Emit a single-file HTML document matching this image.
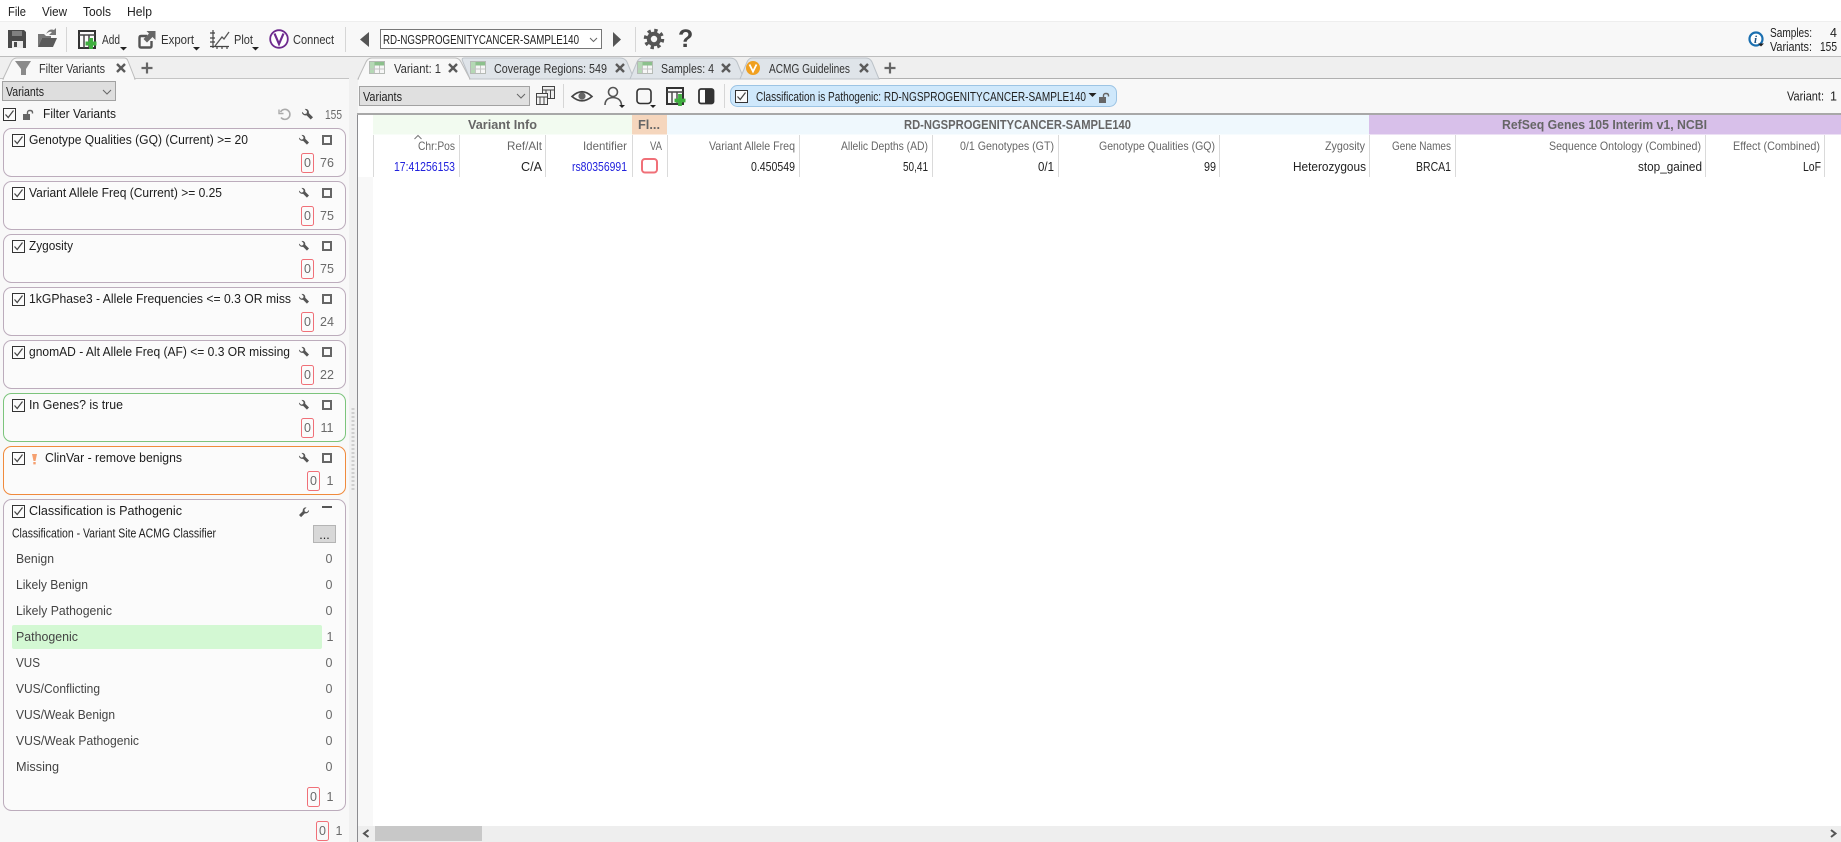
<!DOCTYPE html>
<html lang="en"><head><meta charset="utf-8"><title>Filter Variants</title>
<style>
html,body{margin:0;padding:0;width:1841px;height:842px;overflow:hidden;background:#fff}
svg{display:block;position:absolute;left:0;top:0}
text{font-family:"Liberation Sans",sans-serif;font-size:12.5px;fill:#222}
.m{font-size:13px;fill:#222}
.c{font-size:13px;fill:#1c1c1c}
.g{font-size:12.5px;fill:#6a6a6a}
.h{font-size:12px;fill:#666}
.v{font-size:12.5px;fill:#222}
.b{fill:#2222dd}
.l{font-size:12.5px;fill:#444}
.t{font-size:12.5px;fill:#333}
.gh{font-family:"Liberation Sans",sans-serif;font-weight:bold;font-size:12.5px;fill:#666}
</style></head><body>
<svg width="1841" height="842" viewBox="0 0 1841 842" xmlns="http://www.w3.org/2000/svg">
<defs>
<symbol id="w" viewBox="0 0 12 12" overflow="visible"><path d="M0 3L2.5 5.5L5 5L5.5 2.5L3 0C5.5-.5 8 1.5 7.5 4.5L12 9L9.5 11.5L5 7C2.5 7.5-.5 5.5 0 3Z" fill="#555"/></symbol>
<symbol id="k" viewBox="0 0 13 13" overflow="visible"><rect x=".5" y=".5" width="12" height="12" fill="#fbfbfb" stroke="#333"/><path d="M2.5 6.5L5.2 9.5L10.5 2.5" fill="none" stroke="#444" stroke-width="1.2"/></symbol>
<symbol id="q" viewBox="0 0 10 10" overflow="visible"><rect x="1" y="1" width="8" height="8" fill="none" stroke="#666" stroke-width="2"/></symbol>
<symbol id="d" viewBox="0 0 16 13" overflow="visible"><rect x=".5" y=".5" width="15" height="12" fill="#f6f6f6" stroke="#b5bab5"/><rect x="1" y="1" width="14" height="3.5" fill="#8cc08c"/><rect x="1" y="1" width="4.5" height="11" fill="#b5d8b5"/><path d="M5.5 4.5V12M10.5 4.5V12M1 8H15" stroke="#c4c4c4"/></symbol>
<symbol id="x" viewBox="0 0 10 10" overflow="visible"><path d="M1 1L9 9M9 1L1 9" stroke="#5a5a5a" stroke-width="2.4"/></symbol>
<symbol id="p" viewBox="0 0 12 12" overflow="visible"><path d="M6 .5V11.5M.5 6H11.5" stroke="#666" stroke-width="2.2"/></symbol>
<symbol id="lk" viewBox="0 0 12 10" overflow="visible"><rect x="0" y="4" width="7" height="6" fill="#666"/><path d="M4.5 4V2.5Q4.5.5 7 .5Q9.5.5 9.5 2.5V3.5" fill="none" stroke="#666" stroke-width="1.4"/></symbol>
</defs>

<!-- backgrounds -->
<rect x="0" y="0" width="1841" height="842" fill="#fff"/>
<rect x="0" y="22" width="1841" height="34" fill="#f8f8f8"/>
<rect x="0" y="21" width="1841" height="1" fill="#eeeeee"/>
<rect x="0" y="56" width="1841" height="1" fill="#bdbdbd"/>
<rect x="0" y="57" width="1841" height="22" fill="#efefef"/>
<rect x="0" y="79" width="349" height="763" fill="#f8f8f8"/>
<rect x="349" y="79" width="9" height="763" fill="#f0f0f0"/>
<rect x="358" y="79" width="1483" height="34" fill="#f8f8f8"/>
<rect x="358" y="78" width="1483" height="1" fill="#b0b0b0"/>
<rect x="0" y="78" width="349" height="1" fill="#c4c4c4"/>
<rect x="357" y="113" width="1" height="729" fill="#8c8c90"/>
<rect x="357" y="113" width="1484" height="2" fill="#a8a8a8"/>

<!-- menu -->
<text class="m" x="8" y="16" textLength="18" lengthAdjust="spacingAndGlyphs">File</text>
<text class="m" x="42" y="16" textLength="25" lengthAdjust="spacingAndGlyphs">View</text>
<text class="m" x="83" y="16" textLength="28" lengthAdjust="spacingAndGlyphs">Tools</text>
<text class="m" x="127" y="16" textLength="25" lengthAdjust="spacingAndGlyphs">Help</text>

<!-- toolbar icons -->
<path d="M8 30H24L26 32V48H8Z" fill="#4a4a4a"/><rect x="12" y="31" width="10" height="5" fill="#808080"/><rect x="12" y="41" width="11" height="7" fill="#eaeaea"/><rect x="14" y="42" width="3" height="5" fill="#4a4a4a"/>
<path d="M38 34H44L46 36H51V38H42L38 47Z" fill="#777"/><path d="M42 38H57L53 47H38Z" fill="#5a5a5a"/><path d="M46 34Q49 28 54 30L56 28V35H49L52 32Q49 31 46 34Z" fill="#777"/>
<rect x="66" y="27" width="1" height="25" fill="#d6d6d6"/>
<rect x="79" y="31" width="16" height="17" fill="#fafafa" stroke="#333" stroke-width="2"/><path d="M79 35H95M84 35V48M89 35V48" stroke="#444" stroke-width="1.5"/><path d="M91 38V49M85.5 43.5H96.5" stroke="#3fae3f" stroke-width="4"/>
<text class="t" x="102" y="44" textLength="18" lengthAdjust="spacingAndGlyphs">Add</text>
<path d="M120 47h7l-3.5 3.5z" fill="#222"/>
<path d="M147 36H141Q139.500 36 139.500 38V46Q139.500 47.500 141 47.500H150Q151.500 47.500 151.500 46V41" fill="none" stroke="#555" stroke-width="2.4"/><path d="M144 42L151 35M146.500 31H155.500V40L152.500 37L147 42.500L143.500 39L149 33.500Z" fill="#666"/>
<text class="t" x="161" y="44" textLength="33" lengthAdjust="spacingAndGlyphs">Export</text>
<path d="M193 47h7l-3.500 3.500z" fill="#222"/>
<path d="M213 30V48M210 46.500H229M210 33h5M210 38h5M210 42h5M217 46v3M222 46v3M227 46v3" stroke="#444" stroke-width="1.200" fill="none"/><path d="M215 46L222 37L224 39L229 32" fill="none" stroke="#555" stroke-width="1.300"/>
<text class="t" x="234" y="44" textLength="19" lengthAdjust="spacingAndGlyphs">Plot</text>
<path d="M252 47h7l-3.500 3.500z" fill="#222"/>
<circle cx="279" cy="39" r="8.800" fill="#fff" stroke="#6d2a8e" stroke-width="1.800"/><path d="M274.500 33.500L279 44L283.500 33.500" fill="none" stroke="#6d2a8e" stroke-width="2.200"/>
<text class="t" x="293" y="44" textLength="41" lengthAdjust="spacingAndGlyphs">Connect</text>
<rect x="345" y="27" width="1" height="25" fill="#d6d6d6"/>
<path d="M369 32V47L360 39.500Z" fill="#555"/>
<rect x="380.500" y="29.500" width="221" height="19" fill="#fff" stroke="#777"/>
<text class="t" x="383" y="44" textLength="196" lengthAdjust="spacingAndGlyphs" style="fill:#222">RD-NGSPROGENITYCANCER-SAMPLE140</text>
<path d="M590 38L593.500 41.500L597 38" fill="none" stroke="#666"/>
<path d="M613 32V47L621 39.500Z" fill="#555"/>
<rect x="635" y="27" width="1" height="25" fill="#d6d6d6"/>
<circle cx="654" cy="39" r="8.500" fill="none" stroke="#555" stroke-width="3.500" stroke-dasharray="3.300 3.370"/><circle cx="654" cy="39" r="5.200" fill="none" stroke="#555" stroke-width="4"/>
<text x="678" y="47" style="font-size:25px;font-weight:bold;fill:#444">?</text>

<circle cx="1756" cy="39" r="6.500" fill="#fff" stroke="#1a6fb0" stroke-width="2.200"/><text x="1754" y="43" style="font-family:'Liberation Serif',serif;font-style:italic;font-weight:bold;font-size:11px;fill:#1a4f80">i</text><path d="M1758 43.500h6l-3 3z" fill="#222"/>
<text class="t" x="1770" y="37" textLength="42" lengthAdjust="spacingAndGlyphs" style="fill:#222">Samples:</text>
<text class="t" x="1837" y="37" text-anchor="end" style="fill:#222">4</text>
<text class="t" x="1770" y="51" textLength="42" lengthAdjust="spacingAndGlyphs" style="fill:#222">Variants:</text>
<text class="t" x="1820" y="51" textLength="17" lengthAdjust="spacingAndGlyphs" style="fill:#222">155</text>

<!-- left tabs -->
<path d="M3 79L11 62Q13 58 17 58H124Q127 58 128 61L135 79Z" fill="#f8f8f8" stroke="#bcbcbc"/><rect x="4" y="78" width="130" height="2" fill="#f8f8f8"/>
<path d="M15 61H31L26 69V75H21V69Z" fill="#8a8a8a"/>
<text class="t" x="39" y="73" textLength="66" lengthAdjust="spacingAndGlyphs">Filter Variants</text>
<use href="#x" x="116" y="63" width="10" height="10"/>
<use href="#p" x="141" y="62" width="12" height="12"/>

<!-- left combo -->
<rect x="2.500" y="81.500" width="113" height="19" fill="#dedede" stroke="#a2a2a2"/>
<text class="t" x="6" y="96" textLength="38" lengthAdjust="spacingAndGlyphs" style="fill:#222">Variants</text>
<path d="M103 90L107 94L111 90" fill="none" stroke="#666"/>
<use href="#k" x="3" y="108" width="13" height="13"/>
<use href="#lk" x="23" y="110" width="12" height="10"/>
<text class="c" x="43" y="118" textLength="73" lengthAdjust="spacingAndGlyphs">Filter Variants</text>
<path d="M280.500 112A5 5 0 1 1 281 117.500" fill="none" stroke="#aaa" stroke-width="1.600"/><path d="M279 109.500V113.500H283.500" fill="none" stroke="#aaa" stroke-width="1.400"/>
<use href="#w" x="302" y="109" width="11" height="11"/>
<text class="g" x="325" y="119" textLength="17" lengthAdjust="spacingAndGlyphs">155</text>

<!-- card 1 -->
<rect x="3.500" y="128.500" width="342" height="48" rx="8" fill="#fbfbfb" stroke="#bcacbc"/>
<use href="#k" x="12" y="134" width="13" height="13"/>
<text class="c" x="29" y="144" textLength="219" lengthAdjust="spacingAndGlyphs">Genotype Qualities (GQ) (Current) &gt;= 20</text>
<use href="#w" x="299" y="135" width="10" height="10"/><use href="#q" x="322" y="135" width="10" height="10"/>
<rect x="301.500" y="153.500" width="12" height="19" rx="2" fill="none" stroke="#f07078"/>
<text class="g" x="307.500" y="167" text-anchor="middle">0</text><text class="g" x="327" y="167" text-anchor="middle">76</text>

<!-- card 2 -->
<rect x="3.500" y="181.500" width="342" height="48" rx="8" fill="#fbfbfb" stroke="#bcacbc"/>
<use href="#k" x="12" y="187" width="13" height="13"/>
<text class="c" x="29" y="197" textLength="193" lengthAdjust="spacingAndGlyphs">Variant Allele Freq (Current) &gt;= 0.25</text>
<use href="#w" x="299" y="188" width="10" height="10"/><use href="#q" x="322" y="188" width="10" height="10"/>
<rect x="301.500" y="206.500" width="12" height="19" rx="2" fill="none" stroke="#f07078"/>
<text class="g" x="307.500" y="220" text-anchor="middle">0</text><text class="g" x="327" y="220" text-anchor="middle">75</text>

<!-- card 3 -->
<rect x="3.500" y="234.500" width="342" height="48" rx="8" fill="#fbfbfb" stroke="#bcacbc"/>
<use href="#k" x="12" y="240" width="13" height="13"/>
<text class="c" x="29" y="250" textLength="44" lengthAdjust="spacingAndGlyphs">Zygosity</text>
<use href="#w" x="299" y="241" width="10" height="10"/><use href="#q" x="322" y="241" width="10" height="10"/>
<rect x="301.500" y="259.500" width="12" height="19" rx="2" fill="none" stroke="#f07078"/>
<text class="g" x="307.500" y="273" text-anchor="middle">0</text><text class="g" x="327" y="273" text-anchor="middle">75</text>

<!-- card 4 -->
<rect x="3.500" y="287.500" width="342" height="48" rx="8" fill="#fbfbfb" stroke="#bcacbc"/>
<use href="#k" x="12" y="293" width="13" height="13"/>
<text class="c" x="29" y="303" textLength="262" lengthAdjust="spacingAndGlyphs">1kGPhase3 - Allele Frequencies &lt;= 0.3 OR miss</text>
<use href="#w" x="299" y="294" width="10" height="10"/><use href="#q" x="322" y="294" width="10" height="10"/>
<rect x="301.500" y="312.500" width="12" height="19" rx="2" fill="none" stroke="#f07078"/>
<text class="g" x="307.500" y="326" text-anchor="middle">0</text><text class="g" x="327" y="326" text-anchor="middle">24</text>

<!-- card 5 -->
<rect x="3.500" y="340.500" width="342" height="48" rx="8" fill="#fbfbfb" stroke="#bcacbc"/>
<use href="#k" x="12" y="346" width="13" height="13"/>
<text class="c" x="29" y="356" textLength="261" lengthAdjust="spacingAndGlyphs">gnomAD - Alt Allele Freq (AF) &lt;= 0.3 OR missing</text>
<use href="#w" x="299" y="347" width="10" height="10"/><use href="#q" x="322" y="347" width="10" height="10"/>
<rect x="301.500" y="365.500" width="12" height="19" rx="2" fill="none" stroke="#f07078"/>
<text class="g" x="307.500" y="379" text-anchor="middle">0</text><text class="g" x="327" y="379" text-anchor="middle">22</text>

<!-- card 6 -->
<rect x="3.500" y="393.500" width="342" height="48" rx="8" fill="#fbfbfb" stroke="#7cc47c"/>
<use href="#k" x="12" y="399" width="13" height="13"/>
<text class="c" x="29" y="409" textLength="94" lengthAdjust="spacingAndGlyphs">In Genes? is true</text>
<use href="#w" x="299" y="400" width="10" height="10"/><use href="#q" x="322" y="400" width="10" height="10"/>
<rect x="301.500" y="418.500" width="12" height="19" rx="2" fill="none" stroke="#f07078"/>
<text class="g" x="307.500" y="432" text-anchor="middle">0</text><text class="g" x="327" y="432" text-anchor="middle">11</text>

<!-- card 7 -->
<rect x="3.500" y="446.500" width="342" height="48" rx="8" fill="#fbfbfb" stroke="#f08a3c"/>
<use href="#k" x="12" y="452" width="13" height="13"/>
<path d="M32 454H37L35.500 461H33.500Z" fill="#f5a070"/><rect x="33.300" y="462" width="2.400" height="2.400" fill="#f5a070"/>
<text class="c" x="45" y="462" textLength="137" lengthAdjust="spacingAndGlyphs">ClinVar - remove benigns</text>
<use href="#w" x="299" y="453" width="10" height="10"/><use href="#q" x="322" y="453" width="10" height="10"/>
<rect x="307.500" y="471.500" width="12" height="19" rx="2" fill="none" stroke="#f07078"/>
<text class="g" x="313.500" y="485" text-anchor="middle">0</text><text class="g" x="330" y="485" text-anchor="middle">1</text>

<!-- card 8 -->
<rect x="3.500" y="499.500" width="342" height="311" rx="8" fill="#fbfbfb" stroke="#bcacbc"/>
<use href="#k" x="12" y="505" width="13" height="13"/>
<text class="c" x="29" y="515" textLength="153" lengthAdjust="spacingAndGlyphs">Classification is Pathogenic</text>
<g transform="translate(309,507) scale(-1,1)"><use href="#w" x="0" y="0" width="10" height="11"/></g>
<rect x="322" y="506" width="10" height="2" fill="#555"/>
<text class="v" x="12" y="537.500" textLength="204" lengthAdjust="spacingAndGlyphs">Classification - Variant Site ACMG Classifier</text>
<rect x="313.500" y="525.500" width="22" height="17" fill="#d8d8d8" stroke="#b4b4b4"/>
<text class="v" x="324.500" y="539" text-anchor="middle">...</text>

<rect x="12" y="625" width="310" height="24" rx="2" fill="#d3f8d3"/>
<text class="l" x="16" y="563" textLength="38" lengthAdjust="spacingAndGlyphs">Benign</text><text class="g" x="329" y="563" text-anchor="middle">0</text>
<text class="l" x="16" y="589" textLength="72" lengthAdjust="spacingAndGlyphs">Likely Benign</text><text class="g" x="329" y="589" text-anchor="middle">0</text>
<text class="l" x="16" y="615" textLength="96" lengthAdjust="spacingAndGlyphs">Likely Pathogenic</text><text class="g" x="329" y="615" text-anchor="middle">0</text>
<text class="l" x="16" y="641" textLength="62" lengthAdjust="spacingAndGlyphs">Pathogenic</text><text class="g" x="330" y="641" text-anchor="middle">1</text>
<text class="l" x="16" y="667" textLength="24" lengthAdjust="spacingAndGlyphs">VUS</text><text class="g" x="329" y="667" text-anchor="middle">0</text>
<text class="l" x="16" y="693" textLength="84" lengthAdjust="spacingAndGlyphs">VUS/Conflicting</text><text class="g" x="329" y="693" text-anchor="middle">0</text>
<text class="l" x="16" y="719" textLength="99" lengthAdjust="spacingAndGlyphs">VUS/Weak Benign</text><text class="g" x="329" y="719" text-anchor="middle">0</text>
<text class="l" x="16" y="745" textLength="123" lengthAdjust="spacingAndGlyphs">VUS/Weak Pathogenic</text><text class="g" x="329" y="745" text-anchor="middle">0</text>
<text class="l" x="16" y="771" textLength="43" lengthAdjust="spacingAndGlyphs">Missing</text><text class="g" x="329" y="771" text-anchor="middle">0</text>
<rect x="307.500" y="787.500" width="12" height="19" rx="2" fill="none" stroke="#f07078"/>
<text class="g" x="313.500" y="801" text-anchor="middle">0</text><text class="g" x="330" y="801" text-anchor="middle">1</text>

<rect x="316.500" y="821.500" width="12" height="19" rx="2" fill="none" stroke="#f07078"/>
<text class="g" x="322.500" y="835" text-anchor="middle">0</text><text class="g" x="339" y="835" text-anchor="middle">1</text>

<!-- splitter -->
<path d="M353 408V492" stroke="#cfcfcf" stroke-width="3" stroke-dasharray="2 2"/>

<!-- right tabs -->
<path d="M470 79L463 62Q461 58 464 58H620Q625 58 627 62L634 79Z" fill="#dfe4e9" stroke="#bcc2c8"/>
<path d="M630 79L637 62Q639 58 642 58H730Q735 58 737 62L744 79Z" fill="#dfe4e9" stroke="#bcc2c8"/>
<path d="M740 79L747 62Q749 58 752 58H866Q870 58 872 62L879 79Z" fill="#dfe4e9" stroke="#bcc2c8"/>
<path d="M358 79L366 62Q368 58 372 58H455Q459 58 461 62L470 79Z" fill="#f8f8f8" stroke="#bcbcbc"/><rect x="359" y="78" width="110" height="2" fill="#f8f8f8"/>
<use href="#d" x="369" y="61" width="16" height="13"/>
<text class="t" x="394" y="73" textLength="47" lengthAdjust="spacingAndGlyphs">Variant: 1</text>
<use href="#x" x="448" y="63" width="10" height="10"/>
<use href="#d" x="470" y="61" width="16" height="13"/>
<text class="t" x="494" y="73" textLength="113" lengthAdjust="spacingAndGlyphs">Coverage Regions: 549</text>
<use href="#x" x="615" y="63" width="10" height="10"/>
<use href="#d" x="637" y="61" width="16" height="13"/>
<text class="t" x="661" y="73" textLength="53" lengthAdjust="spacingAndGlyphs">Samples: 4</text>
<use href="#x" x="721" y="63" width="10" height="10"/>
<circle cx="753" cy="68" r="7" fill="#f0a020"/><path d="M749.500 64.500L753 71.500L756.500 64.500" fill="none" stroke="#fff" stroke-width="1.800"/>
<text class="t" x="769" y="73" textLength="81" lengthAdjust="spacingAndGlyphs">ACMG Guidelines</text>
<use href="#x" x="859" y="63" width="10" height="10"/>
<use href="#p" x="884" y="62" width="12" height="12"/>

<!-- right toolbar -->
<rect x="359.500" y="86.500" width="170" height="19" fill="#e0e0e0" stroke="#a2a2a2"/>
<text class="t" x="363" y="101" textLength="39" lengthAdjust="spacingAndGlyphs" style="fill:#222">Variants</text>
<path d="M517 94L521 98L525 94" fill="none" stroke="#666"/>
<rect x="542.500" y="86.500" width="12" height="12" fill="#eee" stroke="#444"/><path d="M542 90H555M546 90V98M550.500 90V98" stroke="#444"/>
<rect x="536.500" y="93.500" width="11" height="11" fill="#f4f4f4" stroke="#444"/><path d="M536 97H548M540 97V105M544 97V105" stroke="#444"/>
<rect x="563" y="84" width="1" height="24" fill="#d6d6d6"/>
<path d="M572 96.500Q582 87 592 96.500Q582 105 572 96.500Z" fill="#fafafa" stroke="#444" stroke-width="1.600"/><circle cx="582" cy="96" r="3.600" fill="#666"/>
<circle cx="613" cy="92" r="4.500" fill="none" stroke="#555" stroke-width="1.600"/><path d="M605 105Q605 98 613 97.500Q621 98 621.500 105" fill="none" stroke="#555" stroke-width="1.600"/><path d="M619 105h6l-3 3z" fill="#222"/>
<rect x="637" y="89" width="14" height="14.500" rx="3" fill="none" stroke="#333" stroke-width="1.600"/><path d="M650 105h6l-3 3z" fill="#222"/>
<rect x="667" y="88" width="16" height="16" fill="#fafafa" stroke="#333" stroke-width="2"/><path d="M667 92H683M672 92V104M677 92V104" stroke="#444" stroke-width="1.400"/><path d="M680 94V106M674.500 100.500H685.500" stroke="#3fae3f" stroke-width="3.800"/>
<rect x="699" y="89" width="14.500" height="14.500" rx="2" fill="#fff" stroke="#333" stroke-width="1.800"/><rect x="705" y="89" width="8.500" height="14.500" fill="#333"/>
<rect x="724" y="84" width="1" height="24" fill="#d6d6d6"/>
<rect x="730.500" y="85.500" width="386" height="21" rx="7" fill="#cfe8fb" stroke="#9cc4e4"/>
<use href="#k" x="735" y="90" width="13" height="13"/>
<text class="t" x="756" y="101" textLength="330" lengthAdjust="spacingAndGlyphs" style="fill:#222">Classification is Pathogenic: RD-NGSPROGENITYCANCER-SAMPLE140</text>
<path d="M1088.500 93h8l-4 4z" fill="#222"/>
<use href="#lk" x="1099" y="93" width="12" height="10"/>
<text class="t" x="1787" y="100.500" textLength="37" lengthAdjust="spacingAndGlyphs" style="fill:#222">Variant:</text>
<text class="t" x="1837" y="100.500" text-anchor="end" style="fill:#222">1</text>

<!-- table -->
<rect x="358" y="115" width="15" height="711" fill="#f8f8f8"/>
<rect x="358" y="115" width="15" height="62" fill="#fff"/>
<rect x="373" y="115" width="259" height="19.500" fill="#f2fbf0"/>
<rect x="632" y="115" width="35" height="19.500" fill="#f5d6bd"/>
<rect x="667" y="115" width="702" height="19.500" fill="#eff8fd"/>
<rect x="1369" y="115" width="472" height="19.500" fill="#d8c0ea"/>
<text class="gh" x="468" y="129" textLength="69" lengthAdjust="spacingAndGlyphs">Variant Info</text>
<text class="gh" x="638" y="129" textLength="22" lengthAdjust="spacingAndGlyphs">Fl...</text>
<text class="gh" x="904" y="129" textLength="227" lengthAdjust="spacingAndGlyphs">RD-NGSPROGENITYCANCER-SAMPLE140</text>
<text class="gh" x="1502" y="129" textLength="205" lengthAdjust="spacingAndGlyphs">RefSeq Genes 105 Interim v1, NCBI</text>

<path d="M373.500 135V177M459.500 135V177M545.500 135V177M632.500 135V177M667.500 135V177M799.500 135V177M932.500 135V177M1058.500 135V177M1219.500 135V177M1369.500 135V177M1455.500 135V177M1705.500 135V177M1824.500 135V177" stroke="#dadada" fill="none"/>
<path d="M414.500 139L418 135.500L421.500 139" fill="none" stroke="#777"/>

<text class="h" x="418" y="150" textLength="37" lengthAdjust="spacingAndGlyphs">Chr:Pos</text>
<text class="h" x="507" y="150" textLength="35" lengthAdjust="spacingAndGlyphs">Ref/Alt</text>
<text class="h" x="583" y="150" textLength="44" lengthAdjust="spacingAndGlyphs">Identifier</text>
<text class="h" x="650" y="150" textLength="12" lengthAdjust="spacingAndGlyphs">VA</text>
<text class="h" x="709" y="150" textLength="86" lengthAdjust="spacingAndGlyphs">Variant Allele Freq</text>
<text class="h" x="841" y="150" textLength="87" lengthAdjust="spacingAndGlyphs">Allelic Depths (AD)</text>
<text class="h" x="960" y="150" textLength="94" lengthAdjust="spacingAndGlyphs">0/1 Genotypes (GT)</text>
<text class="h" x="1099" y="150" textLength="116" lengthAdjust="spacingAndGlyphs">Genotype Qualities (GQ)</text>
<text class="h" x="1325" y="150" textLength="40" lengthAdjust="spacingAndGlyphs">Zygosity</text>
<text class="h" x="1392" y="150" textLength="59" lengthAdjust="spacingAndGlyphs">Gene Names</text>
<text class="h" x="1549" y="150" textLength="152" lengthAdjust="spacingAndGlyphs">Sequence Ontology (Combined)</text>
<text class="h" x="1733" y="150" textLength="87" lengthAdjust="spacingAndGlyphs">Effect (Combined)</text>

<text class="v b" x="394" y="171" textLength="61" lengthAdjust="spacingAndGlyphs">17:41256153</text>
<text class="v" x="521" y="171" textLength="21" lengthAdjust="spacingAndGlyphs">C/A</text>
<text class="v b" x="572" y="171" textLength="55" lengthAdjust="spacingAndGlyphs">rs80356991</text>
<rect x="642" y="159" width="15" height="13.500" rx="3" fill="none" stroke="#f07078" stroke-width="2"/>
<text class="v" x="751" y="171" textLength="44" lengthAdjust="spacingAndGlyphs">0.450549</text>
<text class="v" x="903" y="171" textLength="25" lengthAdjust="spacingAndGlyphs">50,41</text>
<text class="v" x="1038" y="171" textLength="16" lengthAdjust="spacingAndGlyphs">0/1</text>
<text class="v" x="1204" y="171" textLength="12" lengthAdjust="spacingAndGlyphs">99</text>
<text class="v" x="1293" y="171" textLength="73" lengthAdjust="spacingAndGlyphs">Heterozygous</text>
<text class="v" x="1416" y="171" textLength="35" lengthAdjust="spacingAndGlyphs">BRCA1</text>
<text class="v" x="1638" y="171" textLength="64" lengthAdjust="spacingAndGlyphs">stop_gained</text>
<text class="v" x="1803" y="171" textLength="18" lengthAdjust="spacingAndGlyphs">LoF</text>

<!-- scrollbar -->
<rect x="358" y="826" width="1483" height="16" fill="#eeeeee"/>
<rect x="375" y="826" width="107" height="15" fill="#c8c8c8"/>
<path d="M368.500 830L364 833.500L368.500 837" fill="none" stroke="#555" stroke-width="2"/>
<path d="M1831 830L1835.500 833.500L1831 837" fill="none" stroke="#555" stroke-width="2"/>
</svg>
</body></html>
